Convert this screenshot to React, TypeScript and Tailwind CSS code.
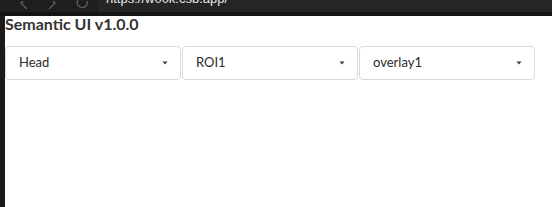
import React from "react";

function Caret() {
  return (
    <svg width="6" height="4" viewBox="0 0 6 4" className="shrink-0">
      <path d="M0.5 0.5 H5.5 L3 3.5 Z" fill="#3a3a3a" />
    </svg>
  );
}

function Dropdown({ label }: { label: string }) {
  return (
    <div className="w-[176px] h-[34px] flex items-center justify-between pl-[13px] pr-[12px] border border-[#d9d9da] rounded-[4px] bg-white text-[13px] text-[#2b2b2b] font-['Lato',sans-serif] shrink-0">
      <span>{label}</span>
      <Caret />
    </div>
  );
}

export default function App() {
  return (
    <div className="w-[552px] h-[207px] flex flex-col overflow-hidden bg-white">
      <div className="h-[16px] flex flex-col shrink-0">
        <div className="h-[12px] flex bg-[#1e1e1e] overflow-hidden">
          <div className="w-[98px] flex items-end gap-[18px] pl-[19px] shrink-0">
            <svg width="10" height="12" viewBox="0 0 10 12" className="-mb-[1px]">
              <path d="M8 -4 L2 2 L8 8" stroke="#5e5e5e" strokeWidth="1.4" fill="none" />
            </svg>
            <svg width="10" height="12" viewBox="0 0 10 12" className="-mb-[1px]">
              <path d="M2 -4 L8 2 L2 8" stroke="#5e5e5e" strokeWidth="1.4" fill="none" />
            </svg>
            <svg width="14" height="12" viewBox="0 0 14 12">
              <path d="M12 1 A5 5 0 1 1 3 0" stroke="#5e5e5e" strokeWidth="1.4" fill="none" />
            </svg>
          </div>
          <div className="flex-1 bg-[#252525] relative overflow-hidden">
            <span className="absolute left-[8px] top-[-8px] text-[13px] leading-[14px] text-[#e8e8e8] font-['Liberation_Sans',sans-serif]">
              https://w00k.csb.app/
            </span>
          </div>
        </div>
        <div className="h-[4px] bg-[#141414]" />
      </div>
      <div className="flex flex-1">
        <div className="w-[5px] bg-[#1b1b1b] shrink-0" />
        <div className="flex-1 flex flex-col">
          <h1 className="font-['Lato',sans-serif] font-bold text-[16px] leading-[16px] text-[#333333]">
            Semantic UI v1.0.0
          </h1>
          <div className="flex gap-[1px] mt-[14px]">
            <Dropdown label="Head" />
            <Dropdown label="ROI1" />
            <Dropdown label="overlay1" />
          </div>
        </div>
      </div>
    </div>
  );
}
